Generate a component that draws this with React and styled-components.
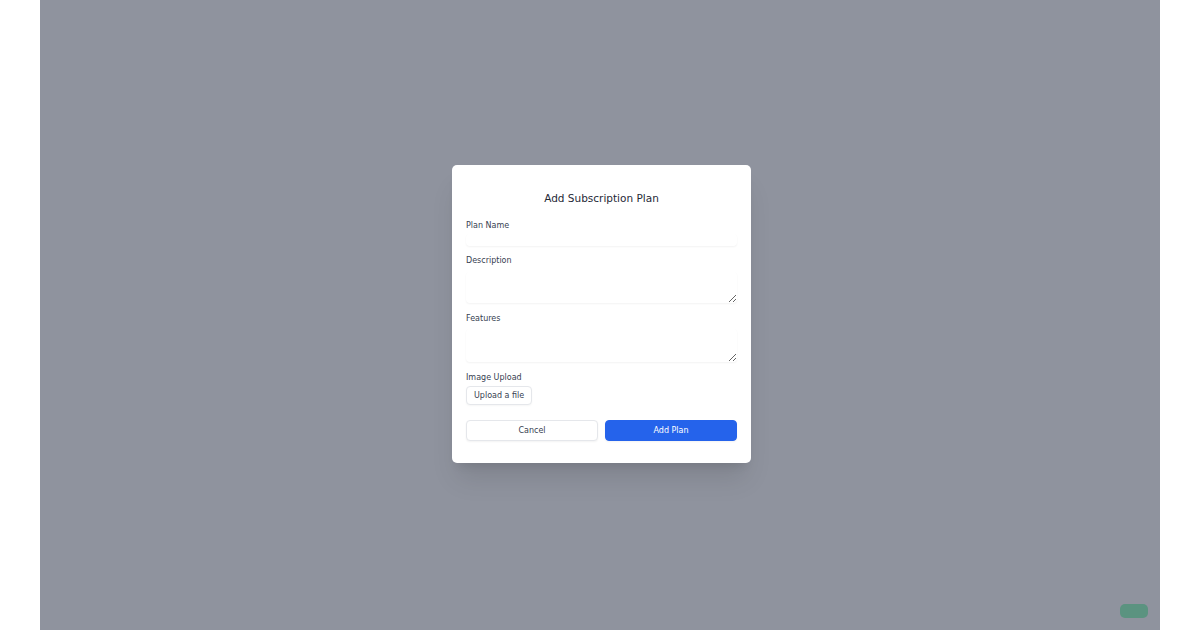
import React from "react";
import styled, { createGlobalStyle } from "styled-components";

const Global = createGlobalStyle`
  html, body { margin: 0; padding: 0; background: #ffffff; }
  body { font-family: "DejaVu Sans", "Liberation Sans", sans-serif; }
  * { box-sizing: border-box; }
`;

const Page = styled.div`
  width: 1200px;
  height: 630px;
  padding: 0 40px;
  background: #ffffff;
`;

const Overlay = styled.div`
  position: relative;
  height: 630px;
  background: #8f939e;
  display: flex;
  align-items: center;
  justify-content: center;
  padding: 0 0 2px 3px;
`;

const Modal = styled.div`
  width: 299px;
  background: #ffffff;
  border-radius: 5px;
  box-shadow: 0 20px 25px -5px rgba(0, 0, 0, 0.1), 0 8px 10px -6px rgba(0, 0, 0, 0.1);
  padding: 25.5px 14px 22px 14px;
  display: flex;
  flex-direction: column;
`;

const Title = styled.h3`
  margin: 0 0 14px 0;
  font-size: 10.5px;
  line-height: 15px;
  font-weight: normal;
  color: #1f2937;
  text-align: center;
`;

const Field = styled.div`
  display: flex;
  flex-direction: column;
  margin-bottom: ${(p) => p.$gap}px;
`;

const Label = styled.label`
  font-size: 8px;
  line-height: 12px;
  color: #374151;
  margin-bottom: ${(p) => p.$mb}px;
`;

const Input = styled.input`
  display: block;
  width: 100%;
  height: 12px;
  border: none;
  border-radius: 4px;
  box-shadow: 0 1px 2px rgba(0, 0, 0, 0.05);
  padding: 0;
  font-size: 8px;
  background: #fff;
  outline: none;
`;

const TextArea = styled.textarea`
  display: block;
  width: 100%;
  height: ${(p) => p.$h}px;
  border: none;
  border-radius: 4px;
  box-shadow: 0 1px 2px rgba(0, 0, 0, 0.05);
  padding: 0;
  font-size: 8px;
  background: #fff;
  outline: none;
  font-family: inherit;
`;

const UploadButton = styled.button`
  align-self: flex-start;
  height: 19px;
  padding: 0 7px;
  border: 1px solid #e5e7eb;
  border-radius: 4px;
  background: #ffffff;
  color: #374151;
  font-family: inherit;
  font-size: 8px;
  line-height: 17px;
  box-shadow: 0 1px 2px rgba(0, 0, 0, 0.04);
`;

const Actions = styled.div`
  display: grid;
  grid-template-columns: 1fr 1fr;
  gap: 7px;
  margin-top: 15px;
`;

const ActionButton = styled.button`
  height: 21.5px;
  border-radius: 4px;
  font-family: inherit;
  font-size: 8px;
  border: 1px solid ${(p) => (p.$primary ? "#2563eb" : "#e5e7eb")};
  background: ${(p) => (p.$primary ? "#2563eb" : "#ffffff")};
  color: ${(p) => (p.$primary ? "#ffffff" : "#374151")};
  box-shadow: 0 1px 2px rgba(0, 0, 0, 0.05);
  padding: 0;
`;

const FloatingPill = styled.div`
  position: absolute;
  right: 12px;
  bottom: 12px;
  width: 28px;
  height: 14px;
  border-radius: 5px;
  background: #5b9380;
`;

export default function App() {
  return (
    <>
      <Global />
      <Page>
        <Overlay>
          <Modal>
            <Title>Add Subscription Plan</Title>
            <Field $gap={9.5}>
              <Label $mb={2}>Plan Name</Label>
              <Input type="text" />
            </Field>
            <Field $gap={10}>
              <Label $mb={4.5}>Description</Label>
              <TextArea $h={31} />
            </Field>
            <Field $gap={10}>
              <Label $mb={4}>Features</Label>
              <TextArea $h={33} />
            </Field>
            <Field $gap={0}>
              <Label $mb={2}>Image Upload</Label>
              <UploadButton type="button">Upload a file</UploadButton>
            </Field>
            <Actions>
              <ActionButton type="button">Cancel</ActionButton>
              <ActionButton type="button" $primary>
                Add Plan
              </ActionButton>
            </Actions>
          </Modal>
          <FloatingPill />
        </Overlay>
      </Page>
    </>
  );
}
